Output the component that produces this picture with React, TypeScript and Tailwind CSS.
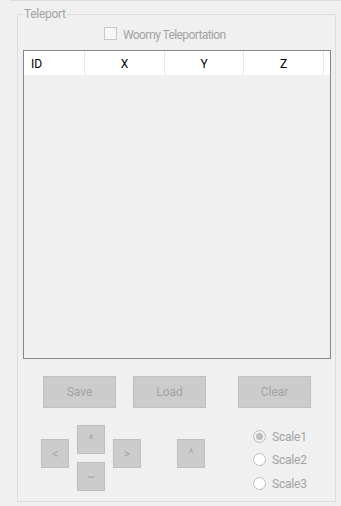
import React from 'react'

const font = { fontFamily: 'Roboto, "Noto Sans", sans-serif' }

function GrayButton({ label, className = '' }: { label: string; className?: string }) {
  return (
    <div
      className={`flex items-center justify-center bg-[#cccccc] border border-[#bfbfbf] text-[#a3a3a3] text-[12px] ${className}`}
    >
      {label}
    </div>
  )
}

function Radio({ label, checked = false }: { label: string; checked?: boolean }) {
  return (
    <div className="flex items-center h-[13px]">
      <div
        className={`w-[13px] h-[13px] rounded-full border border-[#bcbcbc] flex items-center justify-center ${
          checked ? 'bg-[#f0f0f0]' : 'bg-white'
        }`}
      >
        {checked && <div className="w-[7px] h-[7px] rounded-full bg-[#bdbdbd]" />}
      </div>
      <span className="ml-[6px] pt-[2px] text-[12px] leading-[13px] tracking-[-0.2px] text-[#a3a3a3]">{label}</span>
    </div>
  )
}

export default function App() {
  const columns = [
    { name: 'ID', w: 'w-[61px]', align: 'justify-start pl-[7px]' },
    { name: 'X', w: 'w-[80px]', align: 'justify-center' },
    { name: 'Y', w: 'w-[79px]', align: 'justify-center' },
    { name: 'Z', w: 'w-[80px]', align: 'justify-center' },
  ]

  return (
    <div className="w-[341px] h-[506px] bg-[#f0f0f0] overflow-hidden" style={font}>
      {/* edge of the outer container */}
      <div className="ml-[10px] h-px bg-[#dcdcdc]" />

      {/* Teleport group box */}
      <div className="relative ml-[17px] mt-[13px] w-[319px] h-[488px] border border-[#dcdcdc]">
        <span className="absolute left-[5px] -top-[9px] px-[1px] bg-[#f0f0f0] text-[12px] leading-[16px] tracking-[-0.3px] text-[#a3a3a3]">
          Teleport
        </span>

        {/* checkbox */}
        <div className="mt-[12px] ml-[86px] flex items-center h-[13px]">
          <div className="w-[13px] h-[13px] border border-[#c9c9c9] bg-[#f7f7f7]" />
          <span className="ml-[6px] pt-[4px] text-[12px] leading-[13px] tracking-[-0.6px] text-[#a3a3a3]">
            Woomy Teleportation
          </span>
        </div>

        {/* list view */}
        <div className="mt-[10px] ml-[5px] w-[308px] h-[309px] border border-[#828790] bg-[#f0f0f0]">
          <div className="flex h-[24px] bg-white">
            {columns.map((c) => (
              <div
                key={c.name}
                className={`${c.w} flex items-center ${c.align} pt-[1px] border-r border-[#e5e5e5] text-[12px] text-black`}
              >
                {c.name}
              </div>
            ))}
          </div>
        </div>

        {/* Save / Load / Clear */}
        <div className="mt-[17px] ml-[25px] flex">
          <GrayButton label="Save" className="w-[73px] h-[32px]" />
          <GrayButton label="Load" className="w-[73px] h-[32px] ml-[17px]" />
          <GrayButton label="Clear" className="w-[73px] h-[32px] ml-[32px]" />
        </div>

        {/* arrows and scale */}
        <div className="mt-[17px] ml-[23px] flex items-start">
          <div className="pt-[14px]">
            <GrayButton label="<" className="w-[28px] h-[29px]" />
          </div>
          <div className="ml-[8px] flex flex-col gap-[8px]">
            <GrayButton label="^" className="w-[28px] h-[29px]" />
            <GrayButton label="~" className="w-[28px] h-[29px]" />
          </div>
          <div className="ml-[8px] pt-[14px]">
            <GrayButton label=">" className="w-[28px] h-[29px]" />
          </div>
          <div className="ml-[36px] pt-[14px]">
            <GrayButton label="^" className="w-[28px] h-[29px]" />
          </div>
          <div className="ml-[48px] pt-[5px] flex flex-col">
            <Radio label="Scale1" checked />
            <div className="mt-[10px]">
              <Radio label="Scale2" />
            </div>
            <div className="mt-[11px]">
              <Radio label="Scale3" />
            </div>
          </div>
        </div>
      </div>
    </div>
  )
}
